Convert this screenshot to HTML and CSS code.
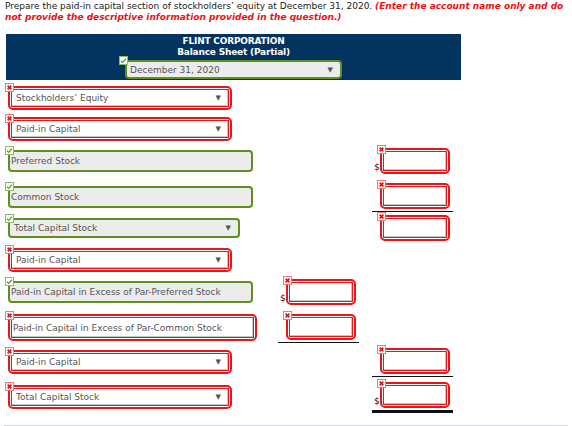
FILE: index.html
```html
<!doctype html>
<html lang="en">
    <head>
        <meta charset="UTF-8" />
        <title>Balance Sheet (Partial)</title>
        <link rel="stylesheet" href="styles.css">
    </head>
    <body>
        <p class="prompt">
            Prepare the paid-in capital section of stockholders’ equity at December 31, 2020.
            <em>(Enter the account name only and do</em><br />
            <em>not provide the descriptive information provided in the question.)</em>
        </p>

        <div class="sheet-head">
            <div class="company">FLINT CORPORATION</div>
            <div class="company">Balance Sheet (Partial)</div>
            <div class="field ok date">
                <span class="mark ok"><svg viewBox="0 0 7 7" width="7" height="7"><path d="M1 3.8l1.7 1.6L6 1.6" /></svg></span>
                <span class="text">December 31, 2020</span>
                <span class="arrow">▼</span>
            </div>
        </div>

        <div class="sheet">
            <!-- section heading -->
            <div class="row">
                <div class="field bad w-select">
                    <span class="mark bad"><svg viewBox="0 0 7 7" width="7" height="7"><path d="M1.6 1.6l3.8 3.8M5.4 1.6l-3.8 3.8" /></svg></span>
                    <div class="inner"><span class="text">Stockholders’ Equity</span><span class="arrow">▼</span></div>
                </div>
            </div>

            <div class="row">
                <div class="field bad w-select">
                    <span class="mark bad"><svg viewBox="0 0 7 7" width="7" height="7"><path d="M1.6 1.6l3.8 3.8M5.4 1.6l-3.8 3.8" /></svg></span>
                    <div class="inner"><span class="text">Paid-in Capital</span><span class="arrow">▼</span></div>
                </div>
            </div>

            <!-- capital stock -->
            <div class="row">
                <div class="field ok w-wide">
                    <span class="mark ok"><svg viewBox="0 0 7 7" width="7" height="7"><path d="M1 3.8l1.7 1.6L6 1.6" /></svg></span>
                    <span class="text">Preferred Stock</span>
                </div>
                <div class="amount-cell right">
                    <span class="cur">$</span>
                    <div class="field bad amount">
                        <span class="mark bad"><svg viewBox="0 0 7 7" width="7" height="7"><path d="M1.6 1.6l3.8 3.8M5.4 1.6l-3.8 3.8" /></svg></span>
                        <div class="inner"></div>
                    </div>
                </div>
            </div>

            <div class="row">
                <div class="field ok w-wide">
                    <span class="mark ok"><svg viewBox="0 0 7 7" width="7" height="7"><path d="M1 3.8l1.7 1.6L6 1.6" /></svg></span>
                    <span class="text">Common Stock</span>
                </div>
                <div class="amount-cell right ruled">
                    <span class="cur"></span>
                    <div class="field bad amount">
                        <span class="mark bad"><svg viewBox="0 0 7 7" width="7" height="7"><path d="M1.6 1.6l3.8 3.8M5.4 1.6l-3.8 3.8" /></svg></span>
                        <div class="inner"></div>
                    </div>
                </div>
            </div>

            <div class="row">
                <div class="field ok w-total">
                    <span class="mark ok"><svg viewBox="0 0 7 7" width="7" height="7"><path d="M1 3.8l1.7 1.6L6 1.6" /></svg></span>
                    <span class="text">Total Capital Stock</span><span class="arrow">▼</span>
                </div>
                <div class="amount-cell right">
                    <span class="cur"></span>
                    <div class="field bad amount">
                        <span class="mark bad"><svg viewBox="0 0 7 7" width="7" height="7"><path d="M1.6 1.6l3.8 3.8M5.4 1.6l-3.8 3.8" /></svg></span>
                        <div class="inner"></div>
                    </div>
                </div>
            </div>

            <!-- additional paid-in capital -->
            <div class="row">
                <div class="field bad w-select">
                    <span class="mark bad"><svg viewBox="0 0 7 7" width="7" height="7"><path d="M1.6 1.6l3.8 3.8M5.4 1.6l-3.8 3.8" /></svg></span>
                    <div class="inner"><span class="text">Paid-in Capital</span><span class="arrow">▼</span></div>
                </div>
            </div>

            <div class="row">
                <div class="field ok w-wide">
                    <span class="mark ok"><svg viewBox="0 0 7 7" width="7" height="7"><path d="M1 3.8l1.7 1.6L6 1.6" /></svg></span>
                    <span class="text">Paid-in Capital in Excess of Par-Preferred Stock</span>
                </div>
                <div class="amount-cell mid">
                    <span class="cur">$</span>
                    <div class="field bad amount">
                        <span class="mark bad"><svg viewBox="0 0 7 7" width="7" height="7"><path d="M1.6 1.6l3.8 3.8M5.4 1.6l-3.8 3.8" /></svg></span>
                        <div class="inner"></div>
                    </div>
                </div>
            </div>

            <div class="row">
                <div class="field bad w-long">
                    <span class="mark bad"><svg viewBox="0 0 7 7" width="7" height="7"><path d="M1.6 1.6l3.8 3.8M5.4 1.6l-3.8 3.8" /></svg></span>
                    <div class="inner plain"><span class="text">Paid-in Capital in Excess of Par-Common Stock</span></div>
                </div>
                <div class="amount-cell mid ruled">
                    <span class="cur"></span>
                    <div class="field bad amount">
                        <span class="mark bad"><svg viewBox="0 0 7 7" width="7" height="7"><path d="M1.6 1.6l3.8 3.8M5.4 1.6l-3.8 3.8" /></svg></span>
                        <div class="inner"></div>
                    </div>
                </div>
            </div>

            <div class="row">
                <div class="field bad w-select">
                    <span class="mark bad"><svg viewBox="0 0 7 7" width="7" height="7"><path d="M1.6 1.6l3.8 3.8M5.4 1.6l-3.8 3.8" /></svg></span>
                    <div class="inner"><span class="text">Paid-in Capital</span><span class="arrow">▼</span></div>
                </div>
                <div class="amount-cell right ruled">
                    <span class="cur"></span>
                    <div class="field bad amount">
                        <span class="mark bad"><svg viewBox="0 0 7 7" width="7" height="7"><path d="M1.6 1.6l3.8 3.8M5.4 1.6l-3.8 3.8" /></svg></span>
                        <div class="inner"></div>
                    </div>
                </div>
            </div>

            <!-- total -->
            <div class="row">
                <div class="field bad w-select">
                    <span class="mark bad"><svg viewBox="0 0 7 7" width="7" height="7"><path d="M1.6 1.6l3.8 3.8M5.4 1.6l-3.8 3.8" /></svg></span>
                    <div class="inner"><span class="text">Total Capital Stock</span><span class="arrow">▼</span></div>
                </div>
                <div class="amount-cell right ruled double">
                    <span class="cur">$</span>
                    <div class="field bad amount">
                        <span class="mark bad"><svg viewBox="0 0 7 7" width="7" height="7"><path d="M1.6 1.6l3.8 3.8M5.4 1.6l-3.8 3.8" /></svg></span>
                        <div class="inner"></div>
                    </div>
                </div>
            </div>
        </div>

        <div class="foot-rule"></div>
    </body>
</html>
```

FILE: styles.css
```css
* {
    margin: 0;
    padding: 0;
    box-sizing: border-box;
}
body {
    font-family: "DejaVu Sans", Verdana, sans-serif;
    font-size: 9px;
    color: #222;
    background: #fff;
    padding: 1px 0 0 4px;
}
.prompt {
    width: 566px;
    line-height: 11px;
    padding-left: 1px;
}
.prompt em {
    color: #ee1111;
    font-weight: bold;
}

/* statement header */
.sheet-head {
    margin: 11px 0 0 2px;
    width: 455px;
    height: 46px;
    padding-top: 2px;
    background-color: #03335f;
    color: #fff;
    text-align: center;
}
.company {
    font-weight: bold;
    line-height: 10.5px;
    letter-spacing: -0.2px;
}

/* answer fields */
.field {
    position: relative;
    display: flex;
    align-items: center;
    color: #555;
}
.field.ok {
    border: 2px solid #5f8f1d;
    border-radius: 4px;
    background-color: #ececec;
    height: 22px;
    padding-left: 1px;
}
.field.bad {
    border: 2px solid #e8151b;
    border-radius: 5px;
    background-color: #fff;
    height: 24px;
    padding: 1px;
}
.field .inner {
    flex: 1;
    height: 100%;
    display: flex;
    align-items: center;
    padding-left: 4px;
    border: 1px solid #e8151b;
    box-shadow: inset -1px -1px 0 #c4c4c4;
}
.field .inner.plain {
    padding-left: 1px;
}
.text {
    white-space: nowrap;
}
.arrow {
    margin-left: auto;
    padding-right: 7px;
    font-size: 7px;
    color: #555;
}

/* field sizes */
.field.date {
    margin-top: 3px;
    width: 217px;
    height: 19px;
    display: inline-flex;
    text-align: left;
}
.date .text {
    padding-left: 2px;
}
.field.w-select {
    width: 224px;
}
.field.w-wide {
    width: 245px;
}
.field.w-total {
    width: 232px;
    height: 20px;
}
.w-total .text {
    padding-left: 3px;
}
.field.w-long {
    width: 249px;
    height: 27px;
}
.field.amount {
    width: 70px;
    height: 26px;
}

/* check marks */
.mark {
    position: absolute;
    top: -5px;
    left: -5px;
    width: 9px;
    height: 9px;
    border: 1px solid;
    background: #fff;
    display: flex;
    align-items: center;
    justify-content: center;
}
.mark svg {
    fill: none;
}
.mark.bad {
    border-color: #f07a7a;
}
.mark.bad path {
    stroke: #e4141a;
    stroke-width: 1.6;
}
.mark.ok {
    border-color: #8dbb5c;
    top: -6px;
}
.mark.ok path {
    stroke: #5a9a1c;
    stroke-width: 1.3;
}
.date .mark.ok {
    left: -8px;
}

/* sheet grid */
.sheet {
    margin-top: 6px;
}
.row {
    display: grid;
    grid-template-columns: 274px 81px 13px 81px;
    align-items: center;
    margin-top: 7px;
}
.row:first-child {
    margin-top: 0;
}
.row > .field {
    margin-left: 4px;
}
.row:has(.ruled) + .row {
    margin-top: 3px;
}
.amount-cell {
    display: flex;
    align-items: flex-end;
    padding-left: 2px;
}
.amount-cell.mid {
    grid-column: 2;
}
.amount-cell.right {
    grid-column: 4;
}
.amount-cell.ruled {
    padding-top: 2px;
    padding-bottom: 2px;
    border-bottom: 1px solid #111;
}
.amount-cell.double {
    border-bottom-width: 3px;
}
.cur {
    width: 6px;
    font-size: 9px;
    line-height: 9px;
    margin-bottom: 2px;
    color: #111;
}
.foot-rule {
    margin-top: 12px;
    width: 564px;
    border-top: 1px solid #cfd5dd;
}
```
